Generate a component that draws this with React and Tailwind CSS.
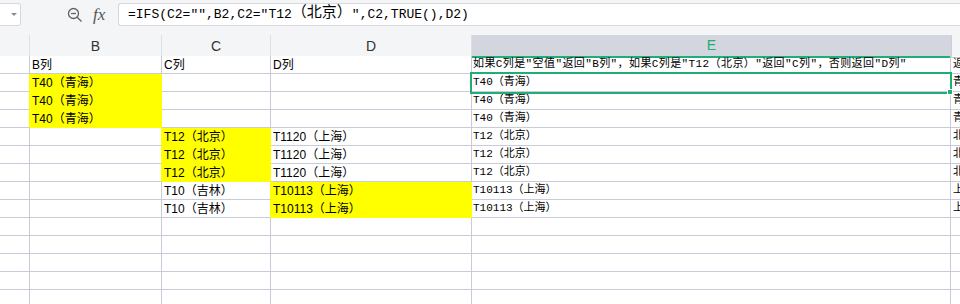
import React from 'react';

const sans = "font-['Liberation_Sans','Noto_Sans_CJK_SC',sans-serif]";
const mono = "font-['Liberation_Mono','Noto_Sans_CJK_SC',monospace]";

// one object per sheet row, y = yellow fill
const rows = [
  { b: 'B列', c: 'C列', d: 'D列', e: '如果C列是"空值"返回"B列"，如果C列是"T12（北京）"返回"C列"，否则返回"D列"', wide: true, f: '返' },
  { b: 'T40（青海）', by: true, e: 'T40（青海）', f: '青' },
  { b: 'T40（青海）', by: true, e: 'T40（青海）', f: '青' },
  { b: 'T40（青海）', by: true, e: 'T40（青海）', f: '青' },
  { c: 'T12（北京）', cy: true, d: 'T1120（上海）', e: 'T12（北京）', f: '北' },
  { c: 'T12（北京）', cy: true, d: 'T1120（上海）', e: 'T12（北京）', f: '北' },
  { c: 'T12（北京）', cy: true, d: 'T1120（上海）', e: 'T12（北京）', f: '北' },
  { c: 'T10（吉林）', d: 'T10113（上海）', dy: true, e: 'T10113（上海）', f: '上' },
  { c: 'T10（吉林）', d: 'T10113（上海）', dy: true, e: 'T10113（上海）', f: '上' },
  {}, {}, {}, {}, {},
];

const Cell = ({ text, yellow, rYellow, font }) => (
  <div
    className={`h-[18px] flex items-center pl-[2px] overflow-hidden whitespace-nowrap border-r border-b text-black ${font} ${
      yellow ? 'bg-[#ffff00] border-b-[#ffff00]' : 'bg-white border-b-[#c7ccd8]'
    } ${rYellow ? 'border-r-[#ffff00]' : 'border-r-[#c7ccd8]'}`}
  >
    {text}
  </div>
);

const App = () => {
  return (
    <div className="relative w-[960px] h-[304px] overflow-hidden bg-white">
      {/* toolbar */}
      <div className="h-[35px] bg-[#f4f5f7] pt-[3px]">
        <div className="flex items-center h-[23px]">
          <div className="w-[21px] h-[23px] bg-white border border-l-0 border-[#d6d8dd] rounded-r-[3px] flex items-center justify-end pr-[3px]">
            <div className="w-0 h-0 border-l-[3px] border-r-[3px] border-t-[3px] border-l-transparent border-r-transparent border-t-[#8a8d93]" />
          </div>
          <svg className="ml-[46px]" width="16" height="16" viewBox="0 0 16 16" fill="none" stroke="#5f6368" strokeWidth="1.3">
            <circle cx="6.5" cy="6.5" r="5" />
            <line x1="4" y1="6.5" x2="9" y2="6.5" />
            <line x1="10.2" y1="10.2" x2="14.5" y2="14.5" />
          </svg>
          <span className="ml-[10px] w-[16px] font-['Liberation_Serif',serif] italic text-[17px] leading-none text-[#555]">fx</span>
          <div className={`ml-[9px] flex-1 h-[23px] bg-white border border-r-0 border-[#d6d8dd] rounded-l-[3px] pl-[9px] flex items-center text-[13px] text-black ${mono}`}>
            =IFS(C2="",B2,C2="T12<span className="text-[15px]">（北京）</span>",C2,TRUE(),D2)
          </div>
        </div>
      </div>

      {/* column headers */}
      <div className={`grid grid-cols-[30px_132px_109px_201px_479px_1fr] h-[21px] bg-[#f4f5f7] text-[14px] text-[#333] ${sans}`}>
        <div className="border-r border-b border-r-[#dcdfe4] border-b-[#c9ced8]" />
        <div className="flex items-center justify-center border-r border-b border-r-[#dcdfe4] border-b-[#c9ced8]">B</div>
        <div className="flex items-center justify-center border-r border-b border-r-[#dcdfe4] border-b-[#c9ced8]">C</div>
        <div className="flex items-center justify-center border-r border-b border-r-[#dcdfe4] border-b-[#c9ced8]">D</div>
        <div className="flex items-center justify-center bg-[#d3d6de] border-b-2 border-[#20ad76] text-[#20ad76]">E</div>
        <div className="border-l border-b border-l-[#c9ced8] border-b-[#c9ced8]" />
      </div>

      {/* sheet rows */}
      {rows.map((r, i) => (
        <div key={i} className="grid grid-cols-[30px_132px_109px_201px_479px_1fr] text-[12px]">
          <Cell rYellow={r.by} font={sans} />
          <Cell text={r.b} yellow={r.by} rYellow={r.by || r.cy} font={sans} />
          <Cell text={r.c} yellow={r.cy} rYellow={r.cy || r.dy} font={sans} />
          <Cell text={r.d} yellow={r.dy} rYellow={r.dy} font={sans} />
          <div className={`h-[18px] flex items-center pl-[1px] overflow-hidden whitespace-nowrap border-r border-b border-[#c7ccd8] text-[11px] text-black ${mono} ${r.wide ? 'tracking-[0.4px]' : ''}`}>
            {r.e}
          </div>
          <div className={`h-[18px] flex items-center pl-[2px] overflow-hidden whitespace-nowrap border-b border-[#c7ccd8] text-[11px] text-black ${mono}`}>
            {r.f}
          </div>
        </div>
      ))}

      {/* active cell E2 */}
      <div className="absolute left-[470px] top-[72px] w-[482px] h-[22px] border-2 border-[#20ad76] pointer-events-none" />
      <div className="absolute left-[947px] top-[89px] w-[6px] h-[6px] bg-[#20ad76] border border-white pointer-events-none" />
    </div>
  );
};

export default App;
